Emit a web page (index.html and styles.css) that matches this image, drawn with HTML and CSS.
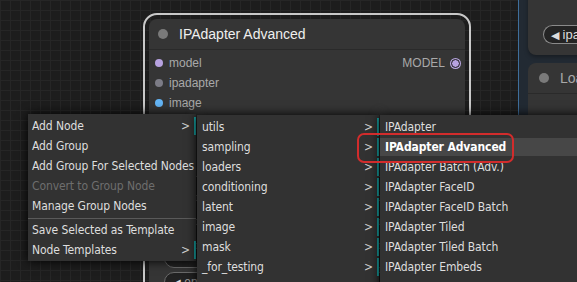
FILE: index.html
```html
<!DOCTYPE html>
<html>
<head>
<meta charset="utf-8">
<link rel="stylesheet" href="styles.css">
</head>
<body>
<div class="canvas">
  <div class="group"></div>

  <div class="node side-node-top">
    <div class="pill"><span class="arrow">◀</span> ipadapter</div>
  </div>
  <div class="node side-node">
    <div class="node-title"><span class="title-dot"></span><span class="title-text dim">Load CLIP Vision</span></div>
  </div>

  <div class="sel-outline"></div>
  <div class="node main-node">
    <div class="node-title"><span class="title-dot"></span><span class="title-text">IPAdapter Advanced</span></div>
    <div class="node-body">
      <div class="slot-row">
        <div class="slot"><span class="dot c-model"></span>model</div>
        <div class="slot out">MODEL<span class="dot c-model ring"></span></div>
      </div>
      <div class="slot-row"><div class="slot"><span class="dot c-ipa"></span>ipadapter</div></div>
      <div class="slot-row"><div class="slot"><span class="dot c-image"></span>image</div></div>
      <div class="slot-row"></div>
      <div class="slot-row"></div>
      <div class="slot-row"></div>
      <div class="widgets">
        <div class="widget"></div>
        <div class="widget"></div>
        <div class="widget"></div>
        <div class="widget"></div>
        <div class="widget"><span><span class="arrow">◀</span> end_at</span></div>
      </div>
    </div>
  </div>

  <div class="menu menu1">
    <div class="entry sub"><span class="label">Add Node</span><span class="chev">&gt;</span></div>
    <div class="entry"><span class="label">Add Group</span></div>
    <div class="entry"><span class="label">Add Group For Selected Nodes</span></div>
    <div class="entry disabled"><span class="label">Convert to Group Node</span></div>
    <div class="entry"><span class="label">Manage Group Nodes</span></div>
    <div class="separator"></div>
    <div class="entry"><span class="label">Save Selected as Template</span></div>
    <div class="entry sub"><span class="label">Node Templates</span><span class="chev">&gt;</span></div>
  </div>

  <div class="menu menu2">
    <div class="entry sub"><span class="label">utils</span><span class="chev">&gt;</span></div>
    <div class="entry sub"><span class="label">sampling</span><span class="chev">&gt;</span></div>
    <div class="entry sub"><span class="label">loaders</span><span class="chev">&gt;</span></div>
    <div class="entry sub"><span class="label">conditioning</span><span class="chev">&gt;</span></div>
    <div class="entry sub"><span class="label">latent</span><span class="chev">&gt;</span></div>
    <div class="entry sub"><span class="label">image</span><span class="chev">&gt;</span></div>
    <div class="entry sub"><span class="label">mask</span><span class="chev">&gt;</span></div>
    <div class="entry sub"><span class="label">_for_testing</span><span class="chev">&gt;</span></div>
  </div>

  <div class="menu menu3">
    <div class="entry"><span class="label">IPAdapter</span></div>
    <div class="entry active"><span class="label">IPAdapter Advanced</span></div>
    <div class="entry"><span class="label">IPAdapter Batch (Adv.)</span></div>
    <div class="entry"><span class="label">IPAdapter FaceID</span></div>
    <div class="entry"><span class="label">IPAdapter FaceID Batch</span></div>
    <div class="entry"><span class="label">IPAdapter Tiled</span></div>
    <div class="entry"><span class="label">IPAdapter Tiled Batch</span></div>
    <div class="entry"><span class="label">IPAdapter Embeds</span></div>
  </div>

  <div class="highlight-box"></div>
</div>
</body>
</html>
```

FILE: styles.css
```css
* { box-sizing: border-box; }
html, body { margin: 0; padding: 0; }
body {
  width: 577px;
  height: 282px;
  overflow: hidden;
  background: #1e1e1e;
  font-family: "Liberation Sans", Arial, sans-serif;
}
.canvas {
  position: relative;
  width: 577px;
  height: 282px;
  overflow: hidden;
  background-color: #1d1d1d;
  background-image:
    linear-gradient(to right, #262626 1px, transparent 1px),
    linear-gradient(to bottom, #262626 1px, transparent 1px);
  background-size: 10px 10px;
}

/* right-hand group */
.group {
  position: absolute;
  left: 518px;
  top: 0;
  width: 70px;
  height: 282px;
  background: #222a33;
  border-left: 1px solid #3f6f9c;
}

.node {
  position: absolute;
  background: #353535;
  display: flex;
  flex-direction: column;
}
.side-node-top {
  left: 528px;
  top: -20px;
  width: 70px;
  height: 75px;
  border-radius: 0 0 0 8px;
  box-shadow: 0 2px 4px rgba(0,0,0,0.35);
  padding: 45px 0 0 15px;
}
.pill {
  height: 19px;
  border: 1px solid #8a8a8a;
  border-radius: 10px 0 0 10px;
  border-right: none;
  background: #242424;
  color: #dcdcdc;
  font-size: 13px;
  line-height: 17px;
  padding-left: 7px;
  white-space: nowrap;
  overflow: hidden;
}
.pill .arrow { font-size: 11px; }

.side-node {
  left: 528px;
  top: 63px;
  width: 70px;
  height: 240px;
  border-radius: 8px 0 0 8px;
}
.side-node .node-title { padding-left: 11px; }

.sel-outline {
  position: absolute;
  left: 143px;
  top: 13px;
  width: 328px;
  height: 320px;
  border: 2px solid #c9c9c9;
  border-radius: 14px;
}
.main-node {
  left: 149px;
  top: 19px;
  width: 316px;
  height: 310px;
  border-radius: 8px;
}
.node-title {
  height: 31px;
  display: flex;
  align-items: center;
  padding-left: 9px;
  border-bottom: 1px solid #2a2a2a;
  flex: none;
}
.title-dot {
  width: 10px;
  height: 10px;
  border-radius: 50%;
  background: #7a7a7a;
  margin-right: 11px;
  flex: none;
}
.title-text {
  color: #efefef;
  font-size: 14px;
  white-space: nowrap;
  padding-bottom: 1px;
}
.title-text.dim { color: #a8a8a8; }

.node-body {
  padding-top: 3px;
  display: flex;
  flex-direction: column;
}
.slot-row {
  height: 20px;
  display: flex;
  justify-content: space-between;
  align-items: center;
  padding: 0 5px 0 6px;
}
.slot {
  display: flex;
  align-items: center;
  color: #a9a9a9;
  font-size: 12px;
}
.slot .dot {
  width: 8px;
  height: 8px;
  border-radius: 50%;
  margin-right: 6px;
}
.slot.out .dot { margin: 0 0 0 6px; width: 9px; height: 9px; }
.dot.ring { border: 1px solid #1a1a1a; box-shadow: 0 0 0 1px #b8a6df; }
.c-model { background: #b7a2e0; }
.c-ipa { background: #7c7c86; }
.c-image { background: #64b5f6; }

.widgets {
  margin-top: 3px;
  display: flex;
  flex-direction: column;
  gap: 4px;
  padding: 0 15px;
}
.widget {
  height: 20px;
  border: 1px solid #6a6a6a;
  border-radius: 10px;
  background: #222;
  color: #9a9a9a;
  font-size: 12px;
  display: flex;
  justify-content: space-between;
  align-items: center;
  padding: 0 8px;
}
.widget .arrow { font-size: 10px; color: #ddd; }

/* context menus */
.menu {
  position: absolute;
  background: #323232;
  box-shadow: 0 0 10px #000;
  font-family: "DejaVu Sans Condensed", "DejaVu Sans", sans-serif;
  font-size: 12px;
  color: #dedede;
  display: flex;
  flex-direction: column;
  padding: 2px 0 1px;
}
.menu1 { left: 28px; top: 114px; width: 168px; }
.menu2 { left: 197px; top: 115px; width: 182px; height: 200px; }
.menu3 { left: 380px; top: 115px; width: 230px; height: 200px; }
.entry {
  height: 18px;
  margin: 1px 0;
  display: flex;
  align-items: center;
  padding-left: 4px;
  white-space: nowrap;
  border-right: 2px solid transparent;
}
.menu2 .entry { padding-left: 5px; }
.menu3 .entry { padding-left: 5px; }
.entry .label { flex: 1; letter-spacing: -0.1px; }
.entry.sub { border-right-color: #17a3a3; }
.entry .chev { margin-right: 4px; color: #cfcfcf; }
.entry.disabled { color: #6e6e6e; }
.entry.active { background: #474747; color: #fff; font-weight: bold; }
.separator {
  height: 4px;
  display: flex;
  align-items: center;
}
.separator::before {
  content: "";
  flex: 1;
  height: 1px;
  background: #5a5a5a;
}

.highlight-box {
  position: absolute;
  left: 357px;
  top: 133px;
  width: 157px;
  height: 30px;
  border: 2px solid #d22c2c;
  border-radius: 7px;
}
```
